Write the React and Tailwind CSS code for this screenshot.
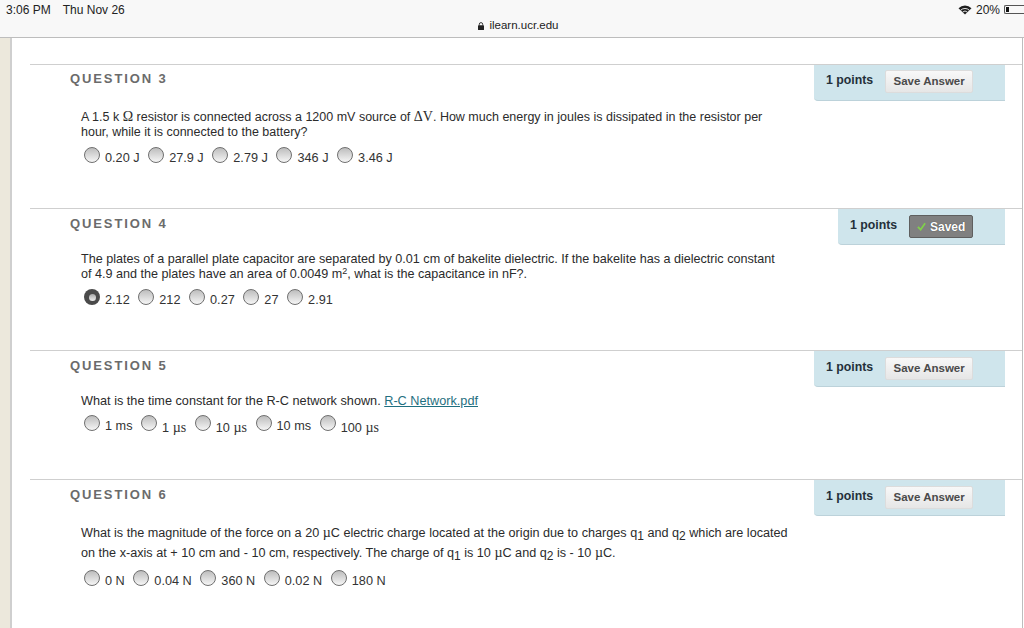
const sans = { fontFamily: '"Liberation Sans", Arial, sans-serif' };

function Serif({ children }) {
  return <span className="font-['Liberation_Serif',serif] text-[14px]">{children}</span>;
}

function Radio({ selected }) {
  if (selected) {
    return (
      <span className="w-4 h-4 rounded-full bg-[#4a4a4a] flex items-center justify-center shrink-0">
        <span className="w-[7px] h-[7px] rounded-full bg-gradient-to-b from-[#a8a8a8] to-[#f0f0f0]" />
      </span>
    );
  }
  return (
    <span className="w-4 h-4 rounded-full border border-[#6f6f6f] bg-gradient-to-b from-[#bdbdbd] to-[#f6f6f6] shrink-0" />
  );
}

function Option({ label, selected, low }) {
  return (
    <div className="flex items-start gap-[5px]">
      <Radio selected={selected} />
      <span className={low ? "mt-[5px] leading-4 text-[#333]" : "mt-[3px] leading-4 text-[#333]"}>{label}</span>
    </div>
  );
}

function Points({ saved, low }) {
  return (
    <div className={`${saved ? "w-[167px]" : "w-[191px]"} ${low ? "pb-0" : "pb-[2px]"} pl-3 h-[36px] bg-[#cfe5ec] rounded-bl-sm border-b border-[#bcd2da] flex items-center gap-3`}>
      <span className="text-[12.3px] font-bold text-[#24303a] -mt-[3px]">1 points</span>
      {saved ? (
        <span className="w-[64px] h-[23px] bg-[#808080] border border-[#5f5f5f] rounded-[2px] text-[12px] font-bold text-white [text-shadow:0_0_1px_#333] flex items-center justify-center gap-[4px]">
          <svg width="9" height="9" viewBox="0 0 10 10"><path d="M1 5.5 L4 8.5 L9 1.5" fill="none" stroke="#7fd04a" strokeWidth="2" /></svg>
          Saved
        </span>
      ) : (
        <span className="w-[88px] h-[23px] bg-gradient-to-b from-[#f8f8f8] to-[#e6e6e6] border border-[#dcdcdc] rounded-[2px] text-[11.5px] font-bold text-[#4a4a4a] flex items-center justify-center">
          Save Answer
        </span>
      )}
    </div>
  );
}

function Question({ n, h, saved, low, bodyClass, optClass, children, options }) {
  return (
    <section className={`${h} ml-[18px] border-t border-[#cfcfcf]`}>
      <div className="flex justify-between items-start pr-[17px]">
        <h2 className={`${low ? "pt-[7px]" : "pt-[6px]"} pl-10 text-[13px] leading-4 font-bold tracking-[1.9px] text-[#6b6b6b]`}>QUESTION {n}</h2>
        <Points saved={saved} low={low} />
      </div>
      <div className={`${bodyClass} pl-[51px] text-[#2b2b2b]`}>{children}</div>
      <div className={`${optClass} pl-[54px] flex gap-[8.6px] text-[12.7px]`}>
        {options.map((o) => (
          <Option key={o.id} label={o.label} selected={o.selected} low={o.low} />
        ))}
      </div>
    </section>
  );
}

export default function App() {
  return (
    <div style={sans} className="w-[1024px] h-[628px] overflow-hidden bg-white flex flex-col">
      <header className="h-[38px] shrink-0 bg-[#f8f8f8] border-b border-[#bdbdbd] text-[#222] text-[12px] px-[6px]">
        <div className="flex justify-between items-center h-[18px] pt-[1px]">
          <div className="flex gap-[12px]">
            <span>3:06 PM</span>
            <span>Thu Nov 26</span>
          </div>
          <div className="flex items-center gap-[4px] -mr-[6px]">
            <svg width="14" height="10" viewBox="0 0 14 10">
              <path d="M7 9.6 L0.5 3.2 A9.2 9.2 0 0 1 13.5 3.2 Z" fill="#1f1f1f" />
              <path d="M2.7 5.2 A6.2 6.2 0 0 1 11.3 5.2" fill="none" stroke="#f8f8f8" strokeWidth="0.9" />
              <path d="M4.6 7.1 A3.5 3.5 0 0 1 9.4 7.1" fill="none" stroke="#f8f8f8" strokeWidth="0.9" />
            </svg>
            <span>20%</span>
            <div className="w-[20px] h-[9px] border border-r-0 border-[#555] rounded-l-[2px] p-[1px]">
              <div className="w-[3px] h-full bg-[#111]" />
            </div>
          </div>
        </div>
        <div className="flex justify-center items-center gap-[5px] text-[11.5px] h-[15px] ml-[13px]">
          <svg width="6" height="8" viewBox="0 0 6 8">
            <path d="M1.3 3.5 V2.3 A1.7 1.7 0 0 1 4.7 2.3 V3.5" fill="none" stroke="#222" strokeWidth="0.9" />
            <rect x="0" y="3.3" width="6" height="4.7" rx="0.6" fill="#222" />
          </svg>
          <span>ilearn.ucr.edu</span>
        </div>
      </header>
      <div className="flex-1 flex min-h-0">
        <div className="w-[10px] bg-[#ece8dc] shrink-0" />
        <div className="w-[2px] bg-[#cfcfcf] shrink-0" />
        <main className="flex-1 pt-[26px] border-r border-[#bdbdbd] mr-px">
          <Question
            n={3}
            h="h-[144px]"
            bodyClass="mt-[8px] leading-[15px] w-[750px] text-[12.5px]"
            optClass="mt-[7px]"
            options={[
              { id: 1, label: "0.20 J" },
              { id: 2, label: "27.9 J" },
              { id: 3, label: "2.79 J" },
              { id: 4, label: "346 J" },
              { id: 5, label: "3.46 J" },
            ]}
          >
            A 1.5 k <Serif>Ω</Serif> resistor is connected across a 1200 mV source of <Serif>ΔV</Serif>. How much energy in joules is dissipated in the resistor per hour, while it is connected to the battery?
          </Question>
          <Question
            n={4}
            h="h-[142px]"
            saved
            low
            bodyClass="mt-[7px] leading-[15px] w-[755px] text-[12.6px]"
            optClass="mt-[7px]"
            options={[
              { id: 1, label: "2.12", selected: true },
              { id: 2, label: "212" },
              { id: 3, label: "0.27" },
              { id: 4, label: "27" },
              { id: 5, label: "2.91" },
            ]}
          >
            The plates of a parallel plate capacitor are separated by 0.01 cm of bakelite dielectric. If the bakelite has a dielectric constant of 4.9 and the plates have an area of 0.0049 m<sup className="text-[9px]">2</sup>, what is the capacitance in nF?.
          </Question>
          <Question
            n={5}
            h="h-[129px]"
            low
            bodyClass="mt-[7px] leading-[15px] text-[12.7px]"
            optClass="mt-[6px]"
            options={[
              { id: 1, label: "1 ms" },
              { id: 2, label: <>1 <Serif>µs</Serif></>, low: true },
              { id: 3, label: <>10 <Serif>µs</Serif></>, low: true },
              { id: 4, label: "10 ms" },
              { id: 5, label: <>100 <Serif>µs</Serif></>, low: true },
            ]}
          >
            What is the time constant for the R-C network shown. <a className="text-[#1f6f80] underline">R-C Network.pdf</a>
          </Question>
          <Question
            n={6}
            h="h-[149px]"
            low
            bodyClass="mt-[7px] leading-[20px] w-[765px] text-[12.65px]"
            optClass="mt-[7px]"
            options={[
              { id: 1, label: "0 N" },
              { id: 2, label: "0.04 N" },
              { id: 3, label: "360 N" },
              { id: 4, label: "0.02 N" },
              { id: 5, label: "180 N" },
            ]}
          >
            What is the magnitude of the force on a 20 <Serif>µ</Serif>C electric charge located at the origin due to charges q<sub className="text-[12px]">1</sub> and q<sub className="text-[12px]">2</sub> which are located on the x-axis at + 10 cm and - 10 cm, respectively. The charge of q<sub className="text-[12px]">1</sub> is 10 <Serif>µ</Serif>C and q<sub className="text-[12px]">2</sub> is - 10 <Serif>µ</Serif>C.
          </Question>
        </main>
      </div>
    </div>
  );
}
